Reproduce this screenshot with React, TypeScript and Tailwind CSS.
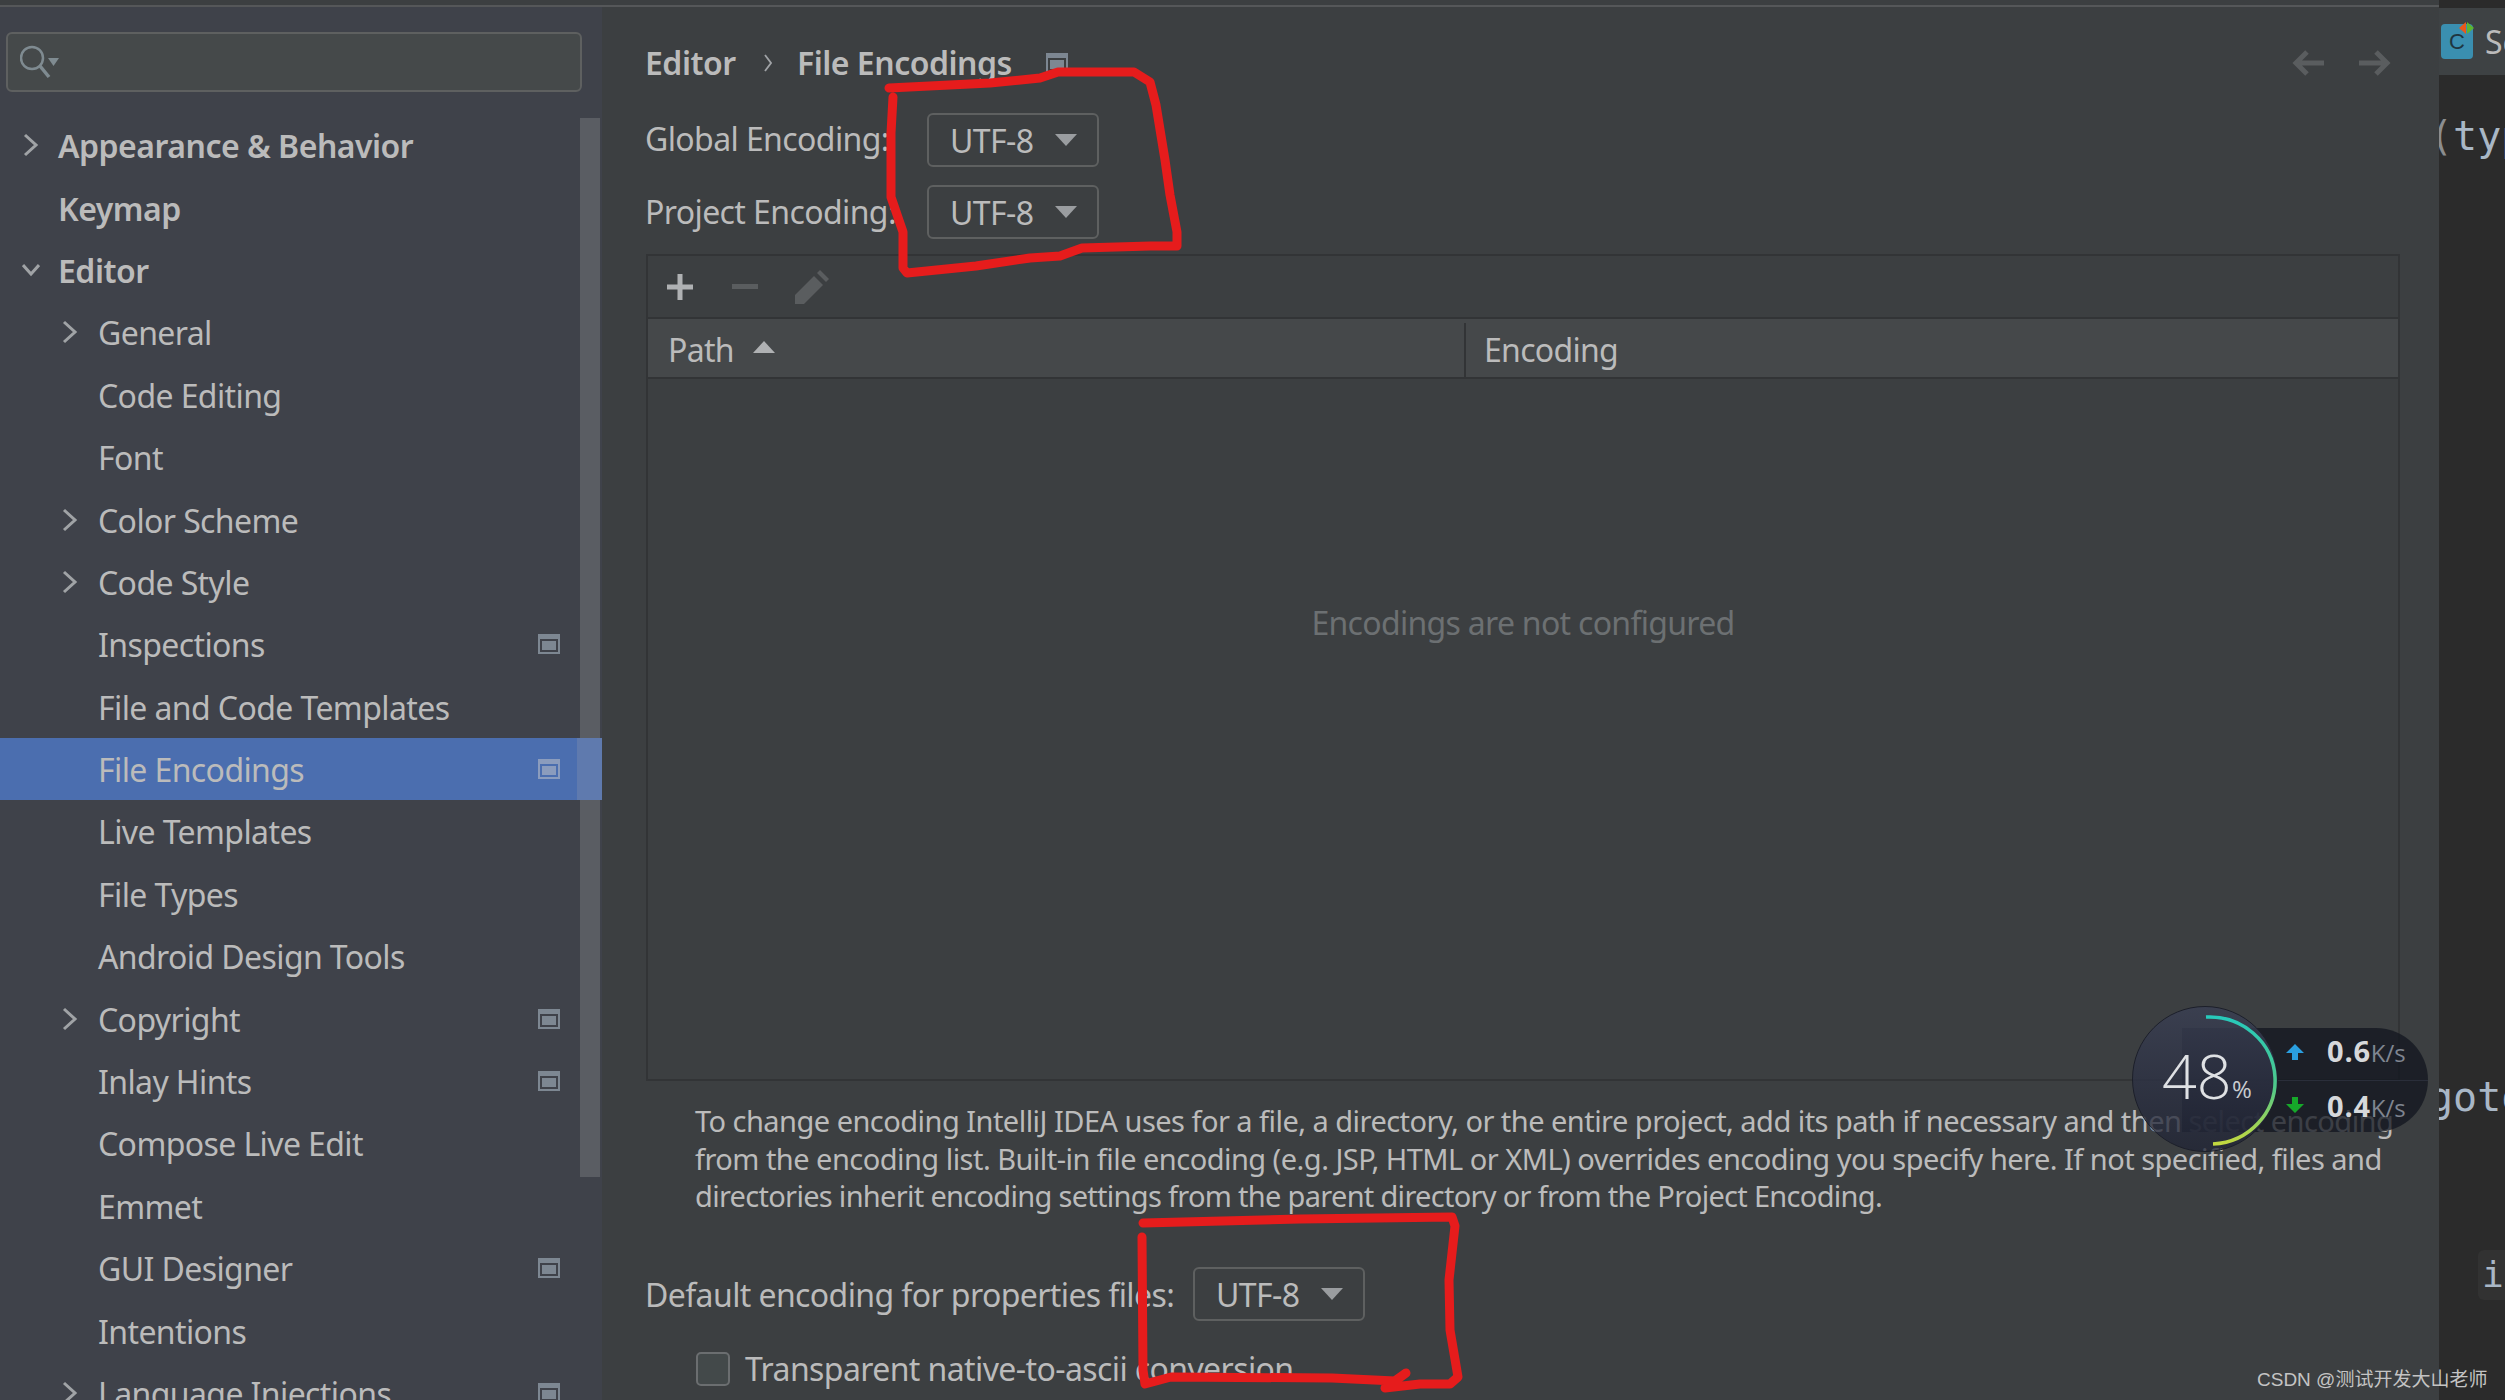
import type { ReactNode } from 'react';

interface TreeItem {
  label: string;
  level: 0 | 1;
  arrow?: 'right' | 'down';
  badge?: boolean;
  selected?: boolean;
}

const items: TreeItem[] = [
  { label: 'Appearance & Behavior', level: 0, arrow: 'right' },
  { label: 'Keymap', level: 0 },
  { label: 'Editor', level: 0, arrow: 'down' },
  { label: 'General', level: 1, arrow: 'right' },
  { label: 'Code Editing', level: 1 },
  { label: 'Font', level: 1 },
  { label: 'Color Scheme', level: 1, arrow: 'right' },
  { label: 'Code Style', level: 1, arrow: 'right' },
  { label: 'Inspections', level: 1, badge: true },
  { label: 'File and Code Templates', level: 1 },
  { label: 'File Encodings', level: 1, badge: true, selected: true },
  { label: 'Live Templates', level: 1 },
  { label: 'File Types', level: 1 },
  { label: 'Android Design Tools', level: 1 },
  { label: 'Copyright', level: 1, arrow: 'right', badge: true },
  { label: 'Inlay Hints', level: 1, badge: true },
  { label: 'Compose Live Edit', level: 1 },
  { label: 'Emmet', level: 1 },
  { label: 'GUI Designer', level: 1, badge: true },
  { label: 'Intentions', level: 1 },
  { label: 'Language Injections', level: 1, arrow: 'right', badge: true },
];

function Badge({ className }: { className: string }) {
  return (
    <div className={`flex h-[20px] w-[22px] shrink-0 flex-col border-2 border-t-[5px] p-[2px] ${className}`}>
      <div className="flex-1 bg-current" />
    </div>
  );
}

function Chevron({ down }: { down?: boolean }) {
  return (
    <svg width="18" height="26" viewBox="0 0 18 26" fill="none" stroke="#a0a3a6" strokeWidth="3">
      {down ? <path d="M1 8l8 9 8-9" /> : <path d="M3 3l11 10-11 10" />}
    </svg>
  );
}

function TreeRow({ item }: { item: TreeItem }) {
  const left = item.level === 0 ? 'pl-[22px]' : 'pl-[61px]';
  const labelLeft = item.level === 0 ? 'w-[36px]' : 'w-[37px]';
  return (
    <div
      className={`flex h-[62.4px] shrink-0 items-center pr-[42px] ${left} ${item.selected ? 'bg-[#4b6eaf]' : ''}`}
    >
      <div className={`flex shrink-0 items-center ${labelLeft}`}>
        {item.arrow && <Chevron down={item.arrow === 'down'} />}
      </div>
      <span className={`flex-1 whitespace-nowrap pt-[2px] text-[32px] text-[#bbbbbb] ${item.level === 0 ? 'font-semibold tracking-[-0.5px]' : 'tracking-[-0.6px]'}`}>
        {item.label}
      </span>
      {item.badge && (
        <Badge className={item.selected ? 'border-[#8b9cbd] text-[#8b9cbd]' : 'border-[#7d8792] text-[#7d8792]'} />
      )}
    </div>
  );
}

function Combo({ className = '' }: { className?: string }) {
  return (
    <div
      className={`flex h-[54px] w-[172px] shrink-0 items-center rounded-[6px] border-2 border-[#5e6060] pl-[21px] ${className}`}
    >
      <span className="w-[105px] pt-[2px] text-[32px] tracking-[-0.6px] text-[#bbbbbb]">UTF-8</span>
      <div className="h-0 w-0 border-x-[11px] border-t-[12px] border-x-transparent border-t-[#9a9da0]" />
    </div>
  );
}

function Row({ children, className = '' }: { children: ReactNode; className?: string }) {
  return <div className={`flex shrink-0 items-center whitespace-nowrap ${className}`}>{children}</div>;
}

function Toolbar() {
  return (
    <div className="flex h-[63px] shrink-0 items-center border-b-2 border-[#323436] pl-[19px]">
      <svg width="26" height="26" viewBox="0 0 26 26" fill="#afb1b3">
        <rect x="10.5" width="5" height="26" />
        <rect y="10.5" width="26" height="5" />
      </svg>
      <div className="ml-[39px] h-[5px] w-[26px] bg-[#5a5d5f]" />
      <svg className="ml-[37px]" width="34" height="34" viewBox="0 0 34 34" fill="#5a5d5f">
        <path d="M0 34v-9L19 6l9 9L9 34z" />
        <path d="M22 3l3-3 9 9-3 3z" />
      </svg>
    </div>
  );
}

function SpeedWidget() {
  return (
    <div className="absolute left-[2132px] top-[1006px] h-[146px] w-[296px]">
      <div className="absolute left-[50px] top-[22px] h-[104px] w-[246px] rounded-r-[52px] bg-[#11151f]/75">
        <div className="absolute left-[96px] right-0 top-[52px] h-px bg-[#2a2e3a]" />
      </div>
      <div className="absolute left-0 top-0 h-[146px] w-[146px] rounded-full border border-[#1c1f2a] bg-gradient-to-b from-[#3a3f52]/85 to-[#1f2334]/75" />
      <svg className="absolute left-0 top-0" width="146" height="146" viewBox="0 0 146 146" fill="none">
        <defs>
          <linearGradient id="ring" x1="0" y1="0" x2="0" y2="1">
            <stop offset="0" stopColor="#27c9bb" />
            <stop offset="0.55" stopColor="#4fc98a" />
            <stop offset="1" stopColor="#c3d83f" />
          </linearGradient>
        </defs>
        <path d="M74 11a65 63 0 0 1 7 127" stroke="url(#ring)" strokeWidth="3.500" />
      </svg>
      <span className="absolute left-[30px] top-[30px] font-['Open_Sans',sans-serif] text-[61px] font-light leading-[80px] text-[#dfe1e4]">
        48
      </span>
      <span className="absolute left-[100px] top-[68px] font-['Open_Sans',sans-serif] text-[24px] leading-[30px] text-[#c9ccd0]">
        %
      </span>
      <svg className="absolute left-[154px] top-[38px]" width="18" height="16" viewBox="0 0 18 16" fill="#2a9fe0">
        <path d="M9 0l9 9h-6v7H6V9H0z" />
      </svg>
      <svg className="absolute left-[154px] top-[91px]" width="18" height="16" viewBox="0 0 18 16" fill="#16a82a">
        <path d="M9 16L0 7h6V0h6v7h6z" />
      </svg>
      <div className="absolute left-[195px] top-[23px] flex items-baseline font-['Open_Sans',sans-serif]">
        <span className="text-[29px] font-bold tracking-[0.8px] text-[#d6d8db]">0.6</span>
        <span className="text-[24px] text-[#7f8590]">K/s</span>
      </div>
      <div className="absolute left-[195px] top-[78px] flex items-baseline font-['Open_Sans',sans-serif]">
        <span className="text-[29px] font-bold tracking-[0.8px] text-[#d6d8db]">0.4</span>
        <span className="text-[24px] text-[#7f8590]">K/s</span>
      </div>
    </div>
  );
}

function RedMarks() {
  return (
    <svg className="absolute left-0 top-0" width="2505" height="1400" viewBox="0 0 2505 1400" fill="none" stroke="#e61c1c" strokeWidth="9" strokeLinecap="round" strokeLinejoin="round">
      <path d="M889 88L990 83L1040 78L1058 72L1134 72L1150 82L1156 105L1165 160L1170 195L1177 232L1177 246L1150 246L1082 248L1060 256L1030 258L976 266L907 273L903 268L903 232L891 197L891 133L893 97" />
      <path d="M1143 1223L1300 1219L1452 1217L1455 1226L1449 1280L1450 1330L1458 1377L1450 1384L1420 1384L1385 1388L1406 1373L1395 1381L1332 1378L1171 1377L1145 1384L1143 1370L1142 1237" />
    </svg>
  );
}

export default function App() {
  return (
    <div className="relative flex h-[1400px] w-[2505px] overflow-hidden bg-[#3c3f41] font-['Noto_Sans',sans-serif] text-[#bbbbbb]">
      <div className="flex w-[2439px] shrink-0 flex-col">
        <div className="h-[7px] shrink-0 border-b-2 border-[#555759] bg-[#3c3f41]" />
        <div className="flex min-h-0 flex-1">
          {/* settings tree */}
          <aside className="relative flex w-[602px] shrink-0 flex-col overflow-hidden bg-[#3f424a]">
            <div className="mx-[6px] mt-[25px] flex h-[60px] w-[576px] shrink-0 items-center rounded-[6px] border-2 border-[#5e6060] bg-[#45494a] pl-[12px]">
              <svg width="40" height="34" viewBox="0 0 40 34" fill="none" stroke="#7f8b91" strokeWidth="2.5">
                <circle cx="12" cy="13" r="11" />
                <path d="M20 21l9 11" strokeWidth="3.5" />
                <path d="M28 13h11l-5.500 8z" fill="#7f8b91" stroke="none" />
              </svg>
            </div>
            <div className="mt-[22px] flex flex-col">
              {items.map((item) => (
                <TreeRow key={item.label} item={item} />
              ))}
            </div>
            <div className="absolute left-[580px] top-[111px] h-[1059px] w-[20px] bg-[#5a5d63]" />
            <div className="absolute left-[577px] top-[731px] h-[62.4px] w-[25px] bg-[#5f7aae]" />
          </aside>

          {/* file encodings page */}
          <main className="flex min-w-0 flex-1 flex-col pl-[43px] pr-[39px]">
            <Row className="h-[106px] pt-[6px]">
              <span className="w-[119px] text-[32px] font-semibold tracking-[-0.5px]">Editor</span>
              <svg width="8" height="18" viewBox="0 0 8 18" fill="none" stroke="#a0a3a6" strokeWidth="1.8">
                <path d="M1 1l6 8-6 8" />
              </svg>
              <span className="ml-[25px] w-[249px] text-[32px] font-semibold tracking-[-0.5px]">File Encodings</span>
              <Badge className="border-[#7d8792] text-[#7d8792]" />
            </Row>
            <Row>
              <span className="w-[282px] pb-[2px] text-[32px] tracking-[-0.6px]">Global Encoding:</span>
              <Combo />
            </Row>
            <Row className="mt-[18px]">
              <span className="w-[282px] text-[32px] tracking-[-0.6px]">Project Encoding:</span>
              <Combo />
            </Row>

            <section className="ml-[1px] mt-[15px] flex h-[827px] shrink-0 flex-col border-2 border-[#323436]">
              <Toolbar />
              <div className="flex h-[60px] shrink-0 border-b-2 border-[#323436] bg-[#45484a] pt-[4px] text-[32px] tracking-[-0.7px]">
                <div className="flex w-[818px] shrink-0 items-center border-r-2 border-[#323436] pl-[20px]">
                  <span>Path</span>
                  <div className="mb-[6px] ml-[19px] h-0 w-0 border-x-[11px] border-b-[12px] border-x-transparent border-b-[#afb1b3]" />
                </div>
                <div className="flex flex-1 items-center pl-[18px]">Encoding</div>
              </div>
              <div className="flex flex-1 items-start justify-center pt-[220px] text-[32px] tracking-[-0.7px] text-[#6c7072]">
                Encodings are not configured
              </div>
            </section>

            <div className="ml-[1px] mt-[21px] shrink-0 whitespace-nowrap pl-[49px] text-[29px] leading-[37.5px] tracking-[-0.53px]">
              <p>To change encoding IntelliJ IDEA uses for a file, a directory, or the entire project, add its path if necessary and then select encoding</p>
              <p>from the encoding list. Built-in file encoding (e.g. JSP, HTML or XML) overrides encoding you specify here. If not specified, files and</p>
              <p className="tracking-[-0.7px]">directories inherit encoding settings from the parent directory or from the Project Encoding.</p>
            </div>

            <Row className="mt-[52px]">
              <span className="w-[548px] pt-[2px] text-[32px] tracking-[-0.6px]">Default encoding for properties files:</span>
              <Combo />
            </Row>
            <Row className="mt-[31px] h-[34px] pl-[51px]">
              <div className="h-[34px] w-[34px] shrink-0 rounded-[5px] border-2 border-[#6b6e70] bg-[#43494a]" />
              <span className="ml-[15px] text-[32px] tracking-[-0.6px]">Transparent native-to-ascii conversion</span>
            </Row>
          </main>
        </div>
      </div>

      {/* editor peeking out behind the dialog */}
      <div className="flex min-w-0 flex-1 flex-col overflow-hidden bg-[#2b2b2b] font-['DejaVu_Sans_Mono',monospace] text-[40px] text-[#a9b7c6]">
        <div className="mt-[8px] flex h-[67px] shrink-0 items-center bg-[#3e4244]">
          <div className="relative ml-[2px] flex h-[35px] w-[32px] shrink-0 items-center justify-center rounded-[4px] bg-[#3a8fb0]">
            <span className="font-['Liberation_Sans',sans-serif] text-[22px] leading-none text-[#1f3640]">C</span>
            <div className="absolute left-[18px] top-[-2px] h-0 w-0 border-y-[6px] border-r-[7px] border-y-transparent border-r-[#e8591c]" />
            <div className="absolute left-[26px] top-[-2px] h-0 w-0 border-y-[6px] border-l-[7px] border-y-transparent border-l-[#5cb531]" />
          </div>
          <span className="ml-[12px] font-['Noto_Sans',sans-serif] text-[32px] text-[#bbbbbb]">Se</span>
        </div>
        <div className="-ml-[10px] mt-[37px] h-[48px] shrink-0 whitespace-nowrap leading-[48px]">
          <span className="text-[#8b8d8f]">(</span>typ
        </div>
        <div className="-ml-[10px] mt-[913px] h-[48px] shrink-0 whitespace-nowrap leading-[48px]">goto</div>
        <div className="ml-[39px] mt-[129px] flex h-[50px] w-[40px] shrink-0 items-center rounded-[6px] bg-[#323232] pl-[4px] text-[36px]">in</div>
      </div>

      <SpeedWidget />
      <RedMarks />
      <div className="absolute left-[2292px] top-[50px] flex gap-[35px]">
        <svg width="32" height="26" viewBox="0 0 32 26" fill="none" stroke="#5a5d5f" strokeWidth="5">
          <path d="M32 13H4M15 2L4 13l11 11" />
        </svg>
        <svg width="32" height="26" viewBox="0 0 32 26" fill="none" stroke="#5a5d5f" strokeWidth="5">
          <path d="M0 13h28M17 2l11 11-11 11" />
        </svg>
      </div>
      <span className="absolute left-[2257px] top-[1367px] font-['Liberation_Sans','Noto_Sans_CJK_SC',sans-serif] text-[19px] leading-[26px] text-[#c4c4c4]">
        CSDN @测试开发大山老师
      </span>
    </div>
  );
}
